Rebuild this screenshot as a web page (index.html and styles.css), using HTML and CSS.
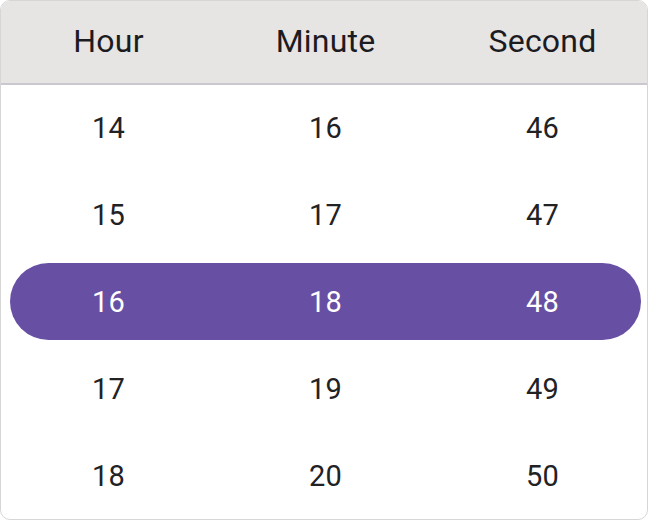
FILE: index.html
```html
<!DOCTYPE html>
<html>
<head>
<meta charset="utf-8">
<link rel="stylesheet" href="styles.css">
</head>
<body>
<div class="picker">
  <div class="header">
    <div class="col-title">Hour</div>
    <div class="col-title">Minute</div>
    <div class="col-title">Second</div>
  </div>
  <div class="rows">
    <div class="row"><span>14</span><span>16</span><span>46</span></div>
    <div class="row"><span>15</span><span>17</span><span>47</span></div>
    <div class="row selected"><span>16</span><span>18</span><span>48</span></div>
    <div class="row"><span>17</span><span>19</span><span>49</span></div>
    <div class="row"><span>18</span><span>20</span><span>50</span></div>
  </div>
</div>
</body>
</html>
```

FILE: styles.css
```css
html, body {
  margin: 0;
  padding: 0;
  background: #ffffff;
}
body {
  font-family: Roboto, "Noto Sans", sans-serif;
  color: #1c1b1f;
}
.picker {
  width: 648px;
  height: 520px;
  box-sizing: border-box;
  border: 1px solid #d6d6d6;
  border-radius: 10px;
  overflow: hidden;
  display: flex;
  flex-direction: column;
}
.header {
  height: 82px;
  background: #e6e5e4;
  border-bottom: 2px solid #cac7ce;
  display: grid;
  grid-template-columns: repeat(3, 217px);
  margin-left: -1px;
  align-items: center;
}
.col-title {
  text-align: center;
  font-size: 32px;
  letter-spacing: 0.2px;
  padding-bottom: 2px;
}
.rows {
  flex: 1;
  display: flex;
  flex-direction: column;
}
.row {
  flex: 1;
  position: relative;
  z-index: 0;
  display: grid;
  grid-template-columns: repeat(3, 217px);
  margin-left: -1px;
  align-items: center;
  font-size: 29px;
  letter-spacing: 0.3px;
  color: #222124;
}
.row span {
  text-align: center;
}
.row.selected {
  color: #ffffff;
}
.row.selected::before {
  content: "";
  position: absolute;
  top: 4px;
  bottom: 5px;
  left: 10px;
  right: 6px;
  background: #6750a4;
  border-radius: 40px;
  z-index: -1;
}
```
